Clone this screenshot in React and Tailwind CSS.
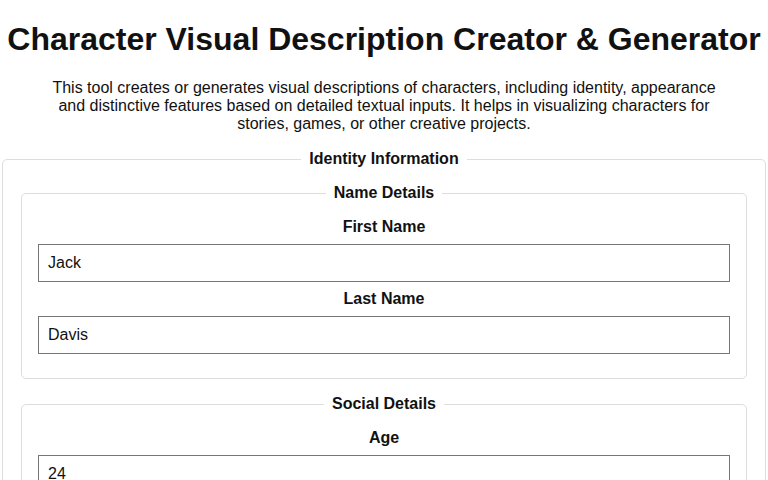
const Field = ({ label, value }) => (
  <div className="mb-2">
    <label className="block mb-2 text-center font-bold leading-[18px]">{label}</label>
    <input
      type="text"
      defaultValue={value}
      className="block w-full h-[38px] px-[9px] border border-[#767676] bg-white text-base text-[#111] outline-none"
    />
  </div>
);

const Group = ({ title, children }) => (
  <fieldset className="mx-[2px] mb-4 px-4 pb-4 border border-[#ddd] rounded-[5px]">
    <legend className="mx-auto px-2 font-bold leading-[18px]">{title}</legend>
    <div className="pt-4">{children}</div>
  </fieldset>
);

export default function App() {
  const font = { fontFamily: '"Liberation Sans", Arial, sans-serif' };

  return (
    <div className="bg-white text-[#111] min-h-screen" style={font}>
      <h1 className="my-[21px] text-[32px] font-bold text-center leading-[37px]">
        Character Visual Description Creator &amp; Generator
      </h1>
      <p className="mt-4 mb-[17px] px-10 text-center leading-[18px]">
        This tool creates or generates visual descriptions of characters, including identity,
        appearance and distinctive features based on detailed textual inputs. It helps in
        visualizing characters for stories, games, or other creative projects.
      </p>

      <fieldset className="mx-[2px] px-4 pb-4 border border-[#ddd] rounded-[5px]">
        <legend className="mx-auto px-2 font-bold leading-[18px]">Identity Information</legend>
        <div className="pt-4">
          <Group title="Name Details">
            <Field label="First Name" value="Jack" />
            <Field label="Last Name" value="Davis" />
          </Group>
          <Group title="Social Details">
            <Field label="Age" value="24" />
            <Field label="Occupation" value="Detective" />
          </Group>
        </div>
      </fieldset>
    </div>
  );
}
